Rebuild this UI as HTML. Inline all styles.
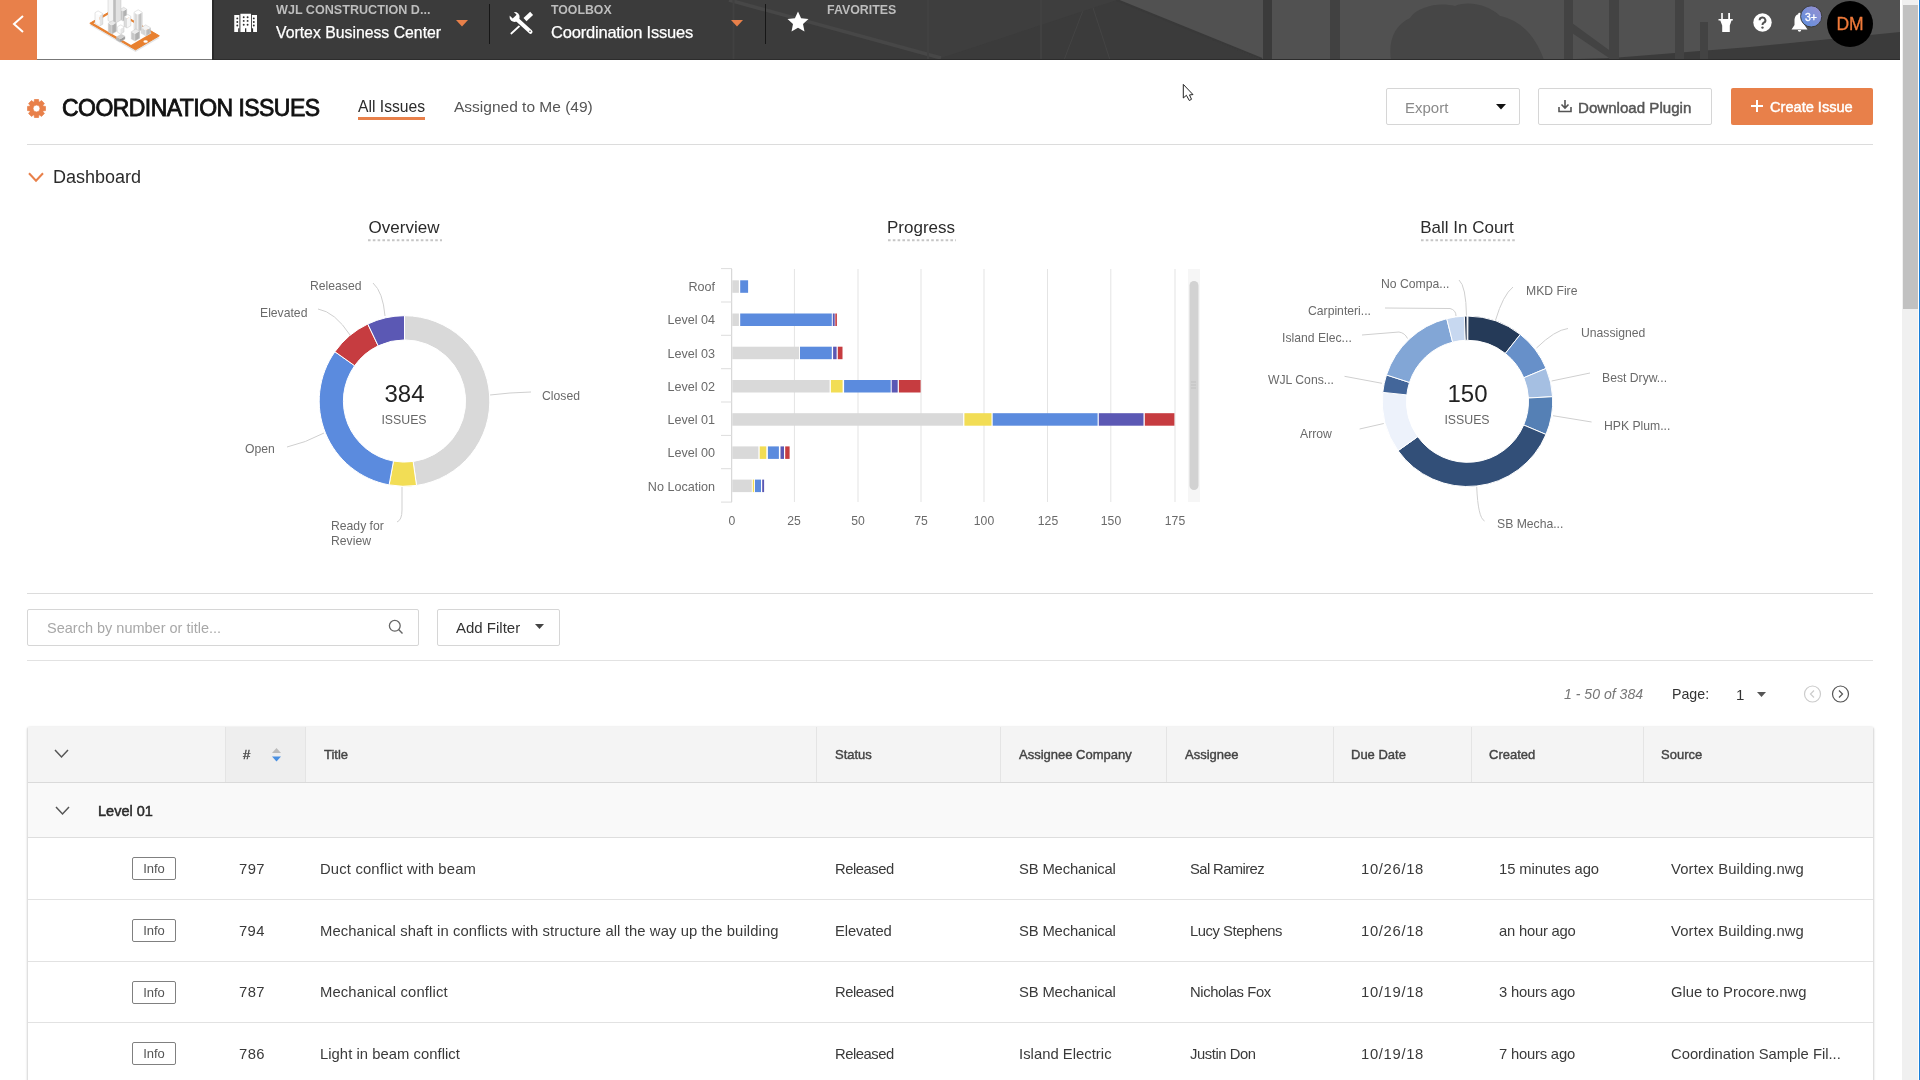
<!DOCTYPE html>
<html><head><meta charset="utf-8">
<style>
*{margin:0;padding:0;box-sizing:border-box}
html,body{width:1920px;height:1080px;overflow:hidden;background:#fff}
body{font-family:"Liberation Sans",sans-serif;color:#333;position:relative}
.a,.td,.th,.lbl,.info{will-change:transform}
.a{position:absolute;white-space:nowrap}
.hdr{position:absolute;left:0;top:0;width:1900px;height:60px;background:#464646;overflow:hidden}
.rule{position:absolute;height:1px;background:#dcdcdc}
.btn{position:absolute;border:1px solid #d6d6d6;border-radius:2px;background:#fff}
.lbl{position:absolute;white-space:nowrap;font-size:12.2px;line-height:13px;color:#6a6a6a;margin-top:1px}
.th{position:absolute;white-space:nowrap;font-size:13px;line-height:14px;color:#444;-webkit-text-stroke:0.4px #444}
.td{position:absolute;white-space:nowrap;font-size:14.7px;line-height:15px;color:#3a3a3a}
.info{position:absolute;left:132px;width:44px;height:23px;border:1.3px solid #808080;border-radius:2px;font-size:13px;line-height:22px;text-align:center;color:#555}
.rowline{position:absolute;left:28px;width:1845px;height:1px;background:#e2e2e2}
</style></head>
<body>
<!-- HEADER -->
<div class="hdr">
<svg width="1900" height="60" style="position:absolute;left:0;top:0">
<rect x="212" y="0" width="1688" height="60" fill="#3b3b3b"/>
<path d="M1117,0 L1900,0 L1900,32 L1750,47 L1612,58 L1540,60 L1262,60Z" fill="#515151"/>
<path d="M1117,0 L1262,59" stroke="#393939" stroke-width="2"/>
<path d="M1087,0 L1064,60 M1090.5,0 L1110,60" stroke="#444" stroke-width="1"/>
<path d="M729,0 L941,58 L1117,0Z" fill="#3e3e3e"/><path d="M729,0 L941,58" stroke="#474747" stroke-width="3.5"/><path d="M733.5,0 V60 M928,0 V60 M1041,0 V60" stroke="#414141" stroke-width="2"/>
<rect x="1263" y="0" width="9" height="60" fill="#3b3b3b"/>
<rect x="1330" y="0" width="10" height="60" fill="#414141"/>
<path d="M1391,60 C1388,40 1395,25 1410,18 C1418,6 1440,2 1455,6 C1470,0 1490,6 1500,16 C1520,20 1535,35 1544,60Z" fill="#464646"/>
<rect x="1564" y="0" width="9" height="60" fill="#434343"/>
<rect x="1609" y="0" width="10" height="60" fill="#434343"/>
<path d="M1572,23 L1609,50 L1609,58 L1572,33Z" fill="#434343"/>
<rect x="1675" y="0" width="9" height="60" fill="#434343"/>
<rect x="1700" y="22" width="8" height="38" fill="#434343"/>
<rect x="0" y="59" width="1900" height="1" fill="#2c2c2c"/>
<rect x="212" y="0" width="2" height="60" fill="#2a2a2a"/>
</svg>
</div>
<div class="a" style="left:0;top:0;width:37px;height:60px;background:#e8804a"></div>
<svg class="a" style="left:10px;top:14px" width="16" height="20"><path d="M13,2 L4,10 L13,18" stroke="#fff" stroke-width="2" fill="none"/></svg>
<div class="a" style="left:37px;top:0;width:175px;height:59px;background:#fff"></div>
<div class="a" style="left:37px;top:59px;width:175px;height:1px;background:#777"></div>
<!-- logo -->
<svg class="a" style="left:80px;top:0" width="90" height="56" viewBox="80 0 90 56">
<path d="M89.5,25 L135.5,52 L159.5,38 L114,11Z" fill="#e4e5e6"/>
<path d="M89.8,23.3 L135.5,49.8 L159.3,35.8 L113.7,9.3Z" fill="#e8802f" stroke="#e8802f" stroke-width="1" stroke-linejoin="round"/>
<path d="M93.5,23.2 L131,45 L151.5,33 L113.8,11.2Z" fill="#fff"/>
<ellipse cx="145.6" cy="41.5" rx="2.2" ry="1.3" fill="#fff"/>
<path d="M123.0,21.0 L120.0,19.3 L120.0,9.5 L123.0,11.2Z" fill="#d6d6d6"/><path d="M123.0,21.0 L126.7,18.9 L126.7,9.1 L123.0,11.2Z" fill="#bfbfbf"/><path d="M123.0,11.2 L120.0,9.5 L123.7,7.3 L126.7,9.1Z" fill="#ececec"/><path d="M124.3,19.7 V10.9" stroke="#9a9a9a" stroke-width="0.45"/><path d="M125.6,19.0 V10.2" stroke="#9a9a9a" stroke-width="0.45"/><path d="M121.7,19.7 V10.9" stroke="#b0b0b0" stroke-width="0.4"/><path d="M120.4,19.0 V10.2" stroke="#b0b0b0" stroke-width="0.4"/><path d="M120.0,19.3 L123.0,21.0 L126.7,18.9 L126.7,9.1 L123.7,7.3 L120.0,9.5Z" fill="none" stroke="#bdbdbd" stroke-width="0.4"/><path d="M114.0,24.0 L108.0,20.5 L108.0,-9.5 L114.0,-6.0Z" fill="#f4f4f4"/><path d="M114.0,24.0 L121.0,19.9 L121.0,-10.1 L114.0,-6.0Z" fill="#e2e2e2"/><path d="M114.0,-6.0 L108.0,-9.5 L115.0,-13.5 L121.0,-10.1Z" fill="#fafafa"/><path d="M113.2,23.536 L115.8,25.043999999999997 V-4.956000000000003 L113.2,-6.463999999999999Z" fill="#bdbdbd"/><path d="M108.0,20.5 L114.0,24.0 L121.0,19.9 L121.0,-10.1 L115.0,-13.5 L108.0,-9.5Z" fill="none" stroke="#bdbdbd" stroke-width="0.4"/><path d="M99.7,26.0 L95.0,23.3 L95.0,12.7 L99.7,15.4Z" fill="#fbfbfb"/><path d="M99.7,26.0 L102.8,24.2 L102.8,13.6 L99.7,15.4Z" fill="#e4e4e4"/><path d="M99.7,15.4 L95.0,12.7 L98.1,10.9 L102.8,13.6Z" fill="#fff"/><path d="M95.0,23.3 L99.7,26.0 L102.8,24.2 L102.8,13.6 L98.1,10.9 L95.0,12.7Z" fill="none" stroke="#bdbdbd" stroke-width="0.4"/><path d="M127.0,28.0 L124.0,26.3 L124.0,16.7 L127.0,18.4Z" fill="#dcdcdc"/><path d="M127.0,28.0 L130.8,25.8 L130.8,16.2 L127.0,18.4Z" fill="#f6f6f6"/><path d="M127.0,18.4 L124.0,16.7 L127.8,14.5 L130.8,16.2Z" fill="#fff"/><path d="M124.0,26.3 L127.0,28.0 L130.8,25.8 L130.8,16.2 L127.8,14.5 L124.0,16.7Z" fill="none" stroke="#bdbdbd" stroke-width="0.4"/><path d="M138.0,32.0 L134.0,29.7 L134.0,12.3 L138.0,14.6Z" fill="#f2f2f2"/><path d="M138.0,32.0 L142.2,29.6 L142.2,12.2 L138.0,14.6Z" fill="#dedede"/><path d="M138.0,14.6 L134.0,12.3 L138.2,9.8 L142.2,12.2Z" fill="#fff"/><path d="M139.3,30.7 V14.3" stroke="#9a9a9a" stroke-width="0.45"/><path d="M140.6,30.0 V13.6" stroke="#9a9a9a" stroke-width="0.45"/><path d="M136.7,30.7 V14.3" stroke="#b0b0b0" stroke-width="0.4"/><path d="M135.4,30.0 V13.6" stroke="#b0b0b0" stroke-width="0.4"/><path d="M134.0,29.7 L138.0,32.0 L142.2,29.6 L142.2,12.2 L138.2,9.8 L134.0,12.3Z" fill="none" stroke="#bdbdbd" stroke-width="0.4"/><path d="M112.0,34.0 L108.3,31.9 L108.3,23.2 L112.0,25.3Z" fill="#d2d2d2"/><path d="M112.0,34.0 L116.3,31.5 L116.3,22.8 L112.0,25.3Z" fill="#bdbdbd"/><path d="M112.0,25.3 L108.3,23.2 L112.6,20.7 L116.3,22.8Z" fill="#e8e8e8"/><path d="M113.3,32.7 V25.0" stroke="#9a9a9a" stroke-width="0.45"/><path d="M114.6,32.0 V24.3" stroke="#9a9a9a" stroke-width="0.45"/><path d="M115.9,31.2 V23.5" stroke="#9a9a9a" stroke-width="0.45"/><path d="M110.7,32.7 V25.0" stroke="#b0b0b0" stroke-width="0.4"/><path d="M109.4,32.0 V24.3" stroke="#b0b0b0" stroke-width="0.4"/><path d="M108.3,31.9 L112.0,34.0 L116.3,31.5 L116.3,22.8 L112.6,20.7 L108.3,23.2Z" fill="none" stroke="#bdbdbd" stroke-width="0.4"/><path d="M120.5,34.0 L117.3,32.1 L117.3,26.9 L120.5,28.8Z" fill="#fafafa"/><path d="M120.5,34.0 L124.0,32.0 L124.0,26.8 L120.5,28.8Z" fill="#e6e6e6"/><path d="M120.5,28.8 L117.3,26.9 L120.8,24.9 L124.0,26.8Z" fill="#fff"/><path d="M117.3,32.1 L120.5,34.0 L124.0,32.0 L124.0,26.8 L120.8,24.9 L117.3,26.9Z" fill="none" stroke="#bdbdbd" stroke-width="0.4"/><path d="M146.0,36.0 L141.2,33.2 L141.2,27.5 L146.0,30.3Z" fill="#e8e8e8"/><path d="M146.0,36.0 L150.5,33.4 L150.5,27.7 L146.0,30.3Z" fill="#cfcfcf"/><path d="M146.0,30.3 L141.2,27.5 L145.7,24.9 L150.5,27.7Z" fill="#f4f4f4"/><path d="M147.3,34.7 V30.0" stroke="#9a9a9a" stroke-width="0.45"/><path d="M148.6,34.0 V29.3" stroke="#9a9a9a" stroke-width="0.45"/><path d="M149.9,33.2 V28.5" stroke="#9a9a9a" stroke-width="0.45"/><path d="M144.7,34.7 V30.0" stroke="#b0b0b0" stroke-width="0.4"/><path d="M143.4,34.0 V29.3" stroke="#b0b0b0" stroke-width="0.4"/><path d="M142.1,33.2 V28.5" stroke="#b0b0b0" stroke-width="0.4"/><path d="M141.2,33.2 L146.0,36.0 L150.5,33.4 L150.5,27.7 L145.7,24.9 L141.2,27.5Z" fill="none" stroke="#bdbdbd" stroke-width="0.4"/><path d="M135.0,41.0 L131.3,38.9 L131.3,31.7 L135.0,33.8Z" fill="#d4d4d4"/><path d="M135.0,41.0 L139.6,38.3 L139.6,31.1 L135.0,33.8Z" fill="#bcbcbc"/><path d="M135.0,33.8 L131.3,31.7 L135.9,29.0 L139.6,31.1Z" fill="#ebebeb"/><path d="M136.3,39.7 V33.5" stroke="#9a9a9a" stroke-width="0.45"/><path d="M137.6,39.0 V32.8" stroke="#9a9a9a" stroke-width="0.45"/><path d="M138.9,38.2 V32.0" stroke="#9a9a9a" stroke-width="0.45"/><path d="M133.7,39.7 V33.5" stroke="#b0b0b0" stroke-width="0.4"/><path d="M132.4,39.0 V32.8" stroke="#b0b0b0" stroke-width="0.4"/><path d="M131.3,38.9 L135.0,41.0 L139.6,38.3 L139.6,31.1 L135.9,29.0 L131.3,31.7Z" fill="none" stroke="#bdbdbd" stroke-width="0.4"/><path d="M120.0,42.0 L116.3,39.9 L116.3,37.1 L120.0,39.2Z" fill="#b4b4b4"/><path d="M120.0,42.0 L125.0,39.1 L125.0,36.3 L120.0,39.2Z" fill="#9c9c9c"/><path d="M120.0,39.2 L116.3,37.1 L121.3,34.2 L125.0,36.3Z" fill="#cfcfcf"/><path d="M116.3,39.9 L120.0,42.0 L125.0,39.1 L125.0,36.3 L121.3,34.2 L116.3,37.1Z" fill="none" stroke="#bdbdbd" stroke-width="0.4"/>
</svg>

<!-- header nav -->
<svg class="a" style="left:234px;top:13px" width="24" height="20" viewBox="0 0 24 20">
<path d="M0.25,2.1 H5.4 V19 H0.25Z M6.4,0.8 H17 V19 H6.4Z M17.9,2.1 H23 V19 H17.9Z" fill="#fff"/>
<g fill="#2e2e2e"><circle cx="3.3" cy="5.4" r="0.95"/><circle cx="3.3" cy="9" r="0.95"/><circle cx="3.3" cy="12.5" r="0.95"/><circle cx="9.7" cy="4.2" r="0.95"/><circle cx="13.6" cy="4.2" r="0.95"/><circle cx="9.7" cy="7.9" r="0.95"/><circle cx="13.6" cy="7.9" r="0.95"/><circle cx="9.7" cy="11.7" r="0.95"/><circle cx="13.6" cy="11.7" r="0.95"/><circle cx="19.8" cy="5.4" r="0.95"/><circle cx="19.8" cy="9" r="0.95"/><circle cx="19.8" cy="12.5" r="0.95"/><rect x="4.2" y="15.3" width="1.3" height="3.8"/><rect x="11" y="15.3" width="1.3" height="3.8"/><rect x="17.8" y="15.3" width="1.3" height="3.8"/></g>
</svg>
<div class="a" style="left:276px;top:3px;font-size:12.6px;line-height:14px;font-weight:bold;color:#bdbdbd">WJL CONSTRUCTION D...</div>
<div class="a" style="left:276px;top:24px;font-size:15.8px;line-height:18px;color:#fff;-webkit-text-stroke:0.25px #fff">Vortex Business Center</div>
<svg class="a" style="left:456px;top:20px" width="12" height="7"><path d="M0,0 H12 L6,6.5Z" fill="#e8804a"/></svg>
<div class="a" style="left:489px;top:4px;width:1px;height:40px;background:#161616"></div>
<svg class="a" style="left:509px;top:10px" width="25" height="25" viewBox="0 0 25 25">
<path d="M16,9.6 L22.6,3.4" stroke="#fff" stroke-width="4.3"/>
<path d="M11,15.5 L2.3,23.5" stroke="#fff" stroke-width="1.7" stroke-linecap="round"/>
<path d="M7.5,9 L21.5,21.8" stroke="#3b3b3b" stroke-width="6.4" stroke-linecap="round"/>
<circle cx="5.6" cy="7" r="6.1" fill="#3b3b3b"/>
<path d="M7.5,9 L21.5,21.8" stroke="#fff" stroke-width="4" stroke-linecap="round"/>
<circle cx="5.6" cy="7" r="5" fill="#fff"/>
<path d="M-0.5,4.4 L3.4,0.5 L7.6,4.7 L3.7,8.6Z" fill="#3b3b3b"/>
<circle cx="21" cy="21.3" r="0.8" fill="#3b3b3b"/>
</svg>
<div class="a" style="left:551px;top:3px;font-size:12.3px;line-height:14px;font-weight:bold;color:#bdbdbd">TOOLBOX</div>
<div class="a" style="left:551px;top:23px;font-size:16.5px;line-height:18px;color:#fff;letter-spacing:-0.2px;-webkit-text-stroke:0.25px #fff">Coordination Issues</div>
<svg class="a" style="left:731px;top:20px" width="12" height="7"><path d="M0,0 H12 L6,6.5Z" fill="#e8804a"/></svg>
<div class="a" style="left:765px;top:4px;width:1px;height:40px;background:#161616"></div>
<svg class="a" style="left:785.5px;top:10.2px" width="24" height="24" viewBox="0 0 24 24"><path d="M12,1.5 L15.1,8.2 L22.5,9 L17,14 L18.5,21.5 L12,17.8 L5.5,21.5 L7,14 L1.5,9 L8.9,8.2Z" fill="#fff"/></svg>
<div class="a" style="left:827px;top:3px;font-size:12.4px;line-height:14px;font-weight:bold;color:#bdbdbd">FAVORITES</div>
<!-- right icons -->
<svg class="a" style="left:1718px;top:13px" width="16" height="19" viewBox="0 0 16 19">
<rect x="3.2" y="0" width="1.6" height="6" fill="#fff"/><rect x="10.2" y="0" width="1.8" height="6" fill="#fff"/>
<path d="M0.5,6 H14.8 V7.6 H13.5 L11.8,12.5 V19 H4.2 V12.5 L2.3,7.6 H0.5Z" fill="#fff"/>
</svg>
<svg class="a" style="left:1753px;top:13px" width="19" height="19" viewBox="0 0 19 19">
<circle cx="9.5" cy="9.5" r="9.2" fill="#fff"/>
<path d="M6.6,7.2 a2.9,2.7 0 1 1 4.2,2.5 c-1,0.6 -1.3,1 -1.3,2.2" stroke="#515151" stroke-width="2" fill="none"/>
<circle cx="9.5" cy="14.6" r="1.2" fill="#515151"/>
</svg>
<svg class="a" style="left:1791px;top:12px" width="17" height="21" viewBox="0 0 17 21">
<circle cx="8.5" cy="2" r="1.3" fill="#fff"/>
<path d="M8.5,2 c3,0 5,2.8 5,6.5 v4.5 l3,4.5 H0.5 l3,-4.5 V8.5 c0,-3.7 2,-6.5 5,-6.5Z" fill="#fff"/>
<path d="M6.8,18 a1.7,1.7 0 0 0 3.4,0Z" fill="#fff"/>
</svg>
<svg class="a" style="left:1800px;top:5px" width="23" height="23" viewBox="0 0 23 23">
<defs><linearGradient id="bg1" x1="0" y1="1" x2="1" y2="0"><stop offset="0" stop-color="#5b8fe0"/><stop offset="1" stop-color="#9b90cf"/></linearGradient></defs>
<circle cx="11.2" cy="11.4" r="10.6" fill="url(#bg1)" stroke="#3c3c3c" stroke-width="1"/>
</svg>
<div class="a" style="left:1805px;top:11.5px;font-size:10.5px;line-height:11px;color:#fff;-webkit-text-stroke:0.3px #fff">3+</div>
<div class="a" style="left:1827px;top:1px;width:46px;height:46px;border-radius:50%;background:#000"></div>
<div class="a" style="left:1827px;top:13px;width:46px;text-align:center;font-size:17.5px;line-height:22px;color:#f07a3a;-webkit-text-stroke:0.3px #f07a3a">DM</div>

<!-- TITLE ROW -->
<svg class="a" style="left:27px;top:98.5px" width="19" height="19" viewBox="0 0 19 19"><path fill="#e8804a" fill-rule="evenodd" stroke="#e8804a" stroke-width="0.6" stroke-linejoin="round" d="M7.03,2.95 L7.45,0.33 L11.55,0.33 L11.97,2.95 L12.39,3.12 L14.54,1.56 L17.44,4.46 L15.88,6.61 L16.05,7.03 L18.67,7.45 L18.67,11.55 L16.05,11.97 L15.88,12.39 L17.44,14.54 L14.54,17.44 L12.39,15.88 L11.97,16.05 L11.55,18.67 L7.45,18.67 L7.03,16.05 L6.61,15.88 L4.46,17.44 L1.56,14.54 L3.12,12.39 L2.95,11.97 L0.33,11.55 L0.33,7.45 L2.95,7.03 L3.12,6.61 L1.56,4.46 L4.46,1.56 L6.61,3.12Z M9.5,6.1 A3.4,3.4 0 1 0 9.51,6.1Z"/></svg>
<div class="a" style="left:62px;top:97px;font-size:23px;line-height:23px;color:#111;-webkit-text-stroke:0.8px #111;letter-spacing:-0.55px">COORDINATION ISSUES</div>
<div class="a" style="left:358px;top:97.5px;font-size:15.7px;line-height:18px;color:#2b2b2b">All Issues</div>
<div class="a" style="left:358px;top:117px;width:67px;height:3px;background:#e8804a"></div>
<div class="a" style="left:454px;top:97.5px;font-size:15.5px;line-height:18px;color:#555">Assigned to Me (49)</div>
<div class="btn" style="left:1386px;top:88px;width:134px;height:37px"></div>
<div class="a" style="left:1405px;top:99px;font-size:15px;line-height:17px;color:#8a8a8a">Export</div>
<svg class="a" style="left:1496px;top:104px" width="10" height="6"><path d="M0,0 H10 L5,5.5Z" fill="#111"/></svg>
<div class="btn" style="left:1538px;top:88px;width:174px;height:37px"></div>
<svg class="a" style="left:1558px;top:99px" width="14" height="14" viewBox="0 0 14 14"><path d="M7,1 V9 M3.5,5.5 L7,9 L10.5,5.5 M1,8 V12.5 H13 V8" stroke="#555" stroke-width="1.6" fill="none"/></svg>
<div class="a" style="left:1578px;top:99px;font-size:15.1px;line-height:17px;color:#555;-webkit-text-stroke:0.45px #555">Download Plugin</div>
<div class="a" style="left:1731px;top:88px;width:142px;height:37px;background:#e8804a;border-radius:2px"></div>
<svg class="a" style="left:1751px;top:100px" width="12" height="12"><path d="M6,0 V12 M0,6 H12" stroke="#fff" stroke-width="2"/></svg>
<div class="a" style="left:1770px;top:99px;font-size:14.6px;line-height:17px;color:#fff;-webkit-text-stroke:0.45px #fff">Create Issue</div>
<div class="rule" style="left:27px;top:144px;width:1846px"></div>
<!-- DASHBOARD -->
<svg class="a" style="left:28px;top:171.5px" width="16" height="11"><path d="M1,1.2 L8,8.8 L15,1.2" stroke="#e8804a" stroke-width="2" fill="none"/></svg>
<div class="a" style="left:53px;top:167px;font-size:18px;line-height:20px;color:#2b2b2b">Dashboard</div>

<!-- CHARTS -->
<svg class="a" style="left:0;top:0" width="1900" height="600">
<g stroke="#cfcfcf" stroke-width="1" fill="none">
<path d="M373,283 Q383,292 385,316"/>
<path d="M318,309 Q335,312 350,335"/>
<path d="M490,395 L510,393 L531,392"/>
<path d="M287,447 Q305,443 324,433"/>
<path d="M402,487 L402,510 Q402,520 397,522"/>
<path d="M1459,280 Q1466,286 1466.5,316"/>
<path d="M1513,287 Q1503,295 1495.6,320"/>
<path d="M1385,308 L1450,308.5 Q1456,310 1456,316"/>
<path d="M1568,328.5 Q1555,330 1536.5,348"/>
<path d="M1362,335 L1399,332 Q1405,333 1407.5,338.5"/>
<path d="M1590,373 L1551.6,381"/>
<path d="M1344.5,376.3 L1382,383.3"/>
<path d="M1591.6,422 L1553,415.7"/>
<path d="M1359.6,429 L1383.8,423.5"/>
<path d="M1476.7,486.5 Q1478,518 1484.6,521"/>
</g>
<path d="M404.50,315.70A85.3,85.3 0 0 1 416.52,485.45L413.11,461.49A61.1,61.1 0 0 0 404.50,339.90Z" fill="#d9d9d9" stroke="#fff" stroke-width="1"/>
<path d="M416.52,485.45A85.3,85.3 0 0 1 389.10,484.90L393.47,461.10A61.1,61.1 0 0 0 413.11,461.49Z" fill="#f2dd55" stroke="#fff" stroke-width="1"/>
<path d="M389.10,484.90A85.3,85.3 0 0 1 334.88,351.71L354.63,365.69A61.1,61.1 0 0 0 393.47,461.10Z" fill="#5b8bde" stroke="#fff" stroke-width="1"/>
<path d="M334.88,351.71A85.3,85.3 0 0 1 367.78,324.01L378.20,345.85A61.1,61.1 0 0 0 354.63,365.69Z" fill="#c63c40" stroke="#fff" stroke-width="1"/>
<path d="M367.78,324.01A85.3,85.3 0 0 1 404.50,315.70L404.50,339.90A61.1,61.1 0 0 0 378.20,345.85Z" fill="#5b58b4" stroke="#fff" stroke-width="1"/>
<path d="M1467.95,316.10A85.2,85.2 0 0 1 1520.31,334.44L1505.31,353.43A61,61 0 0 0 1467.82,340.30Z" fill="#253a58" stroke="#fff" stroke-width="1"/>
<path d="M1520.31,334.44A85.2,85.2 0 0 1 1546.10,368.42L1523.77,377.76A61,61 0 0 0 1505.31,353.43Z" fill="#6790c9" stroke="#fff" stroke-width="1"/>
<path d="M1546.10,368.42A85.2,85.2 0 0 1 1552.58,396.69L1528.41,398.00A61,61 0 0 0 1523.77,377.76Z" fill="#a5bfe2" stroke="#fff" stroke-width="1"/>
<path d="M1552.58,396.69A85.2,85.2 0 0 1 1545.98,434.45L1523.69,425.04A61,61 0 0 0 1528.41,398.00Z" fill="#5580b5" stroke="#fff" stroke-width="1"/>
<path d="M1545.98,434.45A85.2,85.2 0 0 1 1398.05,450.65L1417.78,436.64A61,61 0 0 0 1523.69,425.04Z" fill="#324f78" stroke="#fff" stroke-width="1"/>
<path d="M1398.05,450.65A85.2,85.2 0 0 1 1382.77,392.39L1406.83,394.92A61,61 0 0 0 1417.78,436.64Z" fill="#edf2fb" stroke="#fff" stroke-width="1"/>
<path d="M1382.77,392.39A85.2,85.2 0 0 1 1386.47,374.97L1409.49,382.45A61,61 0 0 0 1406.83,394.92Z" fill="#43669a" stroke="#fff" stroke-width="1"/>
<path d="M1386.47,374.97A85.2,85.2 0 0 1 1446.74,318.67L1452.64,342.14A61,61 0 0 0 1409.49,382.45Z" fill="#82a6d6" stroke="#fff" stroke-width="1"/>
<path d="M1446.74,318.67A85.2,85.2 0 0 1 1464.38,316.16L1465.26,340.34A61,61 0 0 0 1452.64,342.14Z" fill="#c7d8f0" stroke="#fff" stroke-width="1"/>
<path d="M1464.38,316.16A85.2,85.2 0 0 1 1467.05,316.10L1467.18,340.30A61,61 0 0 0 1465.26,340.34Z" fill="#1f2f4a" stroke="#fff" stroke-width="1"/>

<rect x="793.9" y="269" width="1" height="233" fill="#e4e4e4"/><rect x="857.5" y="269" width="1" height="233" fill="#e4e4e4"/><rect x="920.5" y="269" width="1" height="233" fill="#e4e4e4"/><rect x="983.5" y="269" width="1" height="233" fill="#e4e4e4"/><rect x="1047.0" y="269" width="1" height="233" fill="#e4e4e4"/><rect x="1110.3" y="269" width="1" height="233" fill="#e4e4e4"/><rect x="1174.5" y="269" width="1" height="233" fill="#e4e4e4"/>
<rect x="731.2" y="269" width="1" height="233" fill="#cfcfcf"/>
<rect x="721" y="268.1" width="11" height="1" fill="#ddd"/><rect x="721" y="301.5" width="11" height="1" fill="#ddd"/><rect x="721" y="334.8" width="11" height="1" fill="#ddd"/><rect x="721" y="368.2" width="11" height="1" fill="#ddd"/><rect x="721" y="401.5" width="11" height="1" fill="#ddd"/><rect x="721" y="434.9" width="11" height="1" fill="#ddd"/><rect x="721" y="468.2" width="11" height="1" fill="#ddd"/><rect x="721" y="501.6" width="11" height="1" fill="#ddd"/>
<rect x="732.3" y="280.3" width="6.6" height="12.5" fill="#d9d9d9"/><rect x="740.2" y="280.3" width="7.9" height="12.5" fill="#5b8bde"/><rect x="732.3" y="313.5" width="6.6" height="12.5" fill="#d9d9d9"/><rect x="740.2" y="313.5" width="91.6" height="12.5" fill="#5b8bde"/><rect x="832.8" y="313.5" width="1.9" height="12.5" fill="#5b58b4"/><rect x="835.3" y="313.5" width="1.6" height="12.5" fill="#c63c40"/><rect x="732.3" y="346.7" width="66.8" height="12.5" fill="#d9d9d9"/><rect x="800.0" y="346.7" width="31.8" height="12.5" fill="#5b8bde"/><rect x="833.1" y="346.7" width="3.5" height="12.5" fill="#5b58b4"/><rect x="837.8" y="346.7" width="4.7" height="12.5" fill="#c63c40"/><rect x="732.3" y="380.0" width="97.3" height="12.5" fill="#d9d9d9"/><rect x="830.9" y="380.0" width="11.7" height="12.5" fill="#f2dd55"/><rect x="844.1" y="380.0" width="46.6" height="12.5" fill="#5b8bde"/><rect x="891.7" y="380.0" width="6.0" height="12.5" fill="#5b58b4"/><rect x="898.9" y="380.0" width="21.7" height="12.5" fill="#c63c40"/><rect x="732.3" y="413.2" width="230.8" height="12.5" fill="#d9d9d9"/><rect x="964.4" y="413.2" width="27.1" height="12.5" fill="#f2dd55"/><rect x="992.7" y="413.2" width="104.9" height="12.5" fill="#5b8bde"/><rect x="1098.8" y="413.2" width="44.7" height="12.5" fill="#5b58b4"/><rect x="1144.8" y="413.2" width="29.6" height="12.5" fill="#c63c40"/><rect x="732.3" y="446.4" width="26.1" height="12.5" fill="#d9d9d9"/><rect x="759.7" y="446.4" width="6.6" height="12.5" fill="#f2dd55"/><rect x="767.9" y="446.4" width="11.0" height="12.5" fill="#5b8bde"/><rect x="780.5" y="446.4" width="3.5" height="12.5" fill="#5b58b4"/><rect x="785.2" y="446.4" width="4.4" height="12.5" fill="#c63c40"/><rect x="732.3" y="479.6" width="19.5" height="12.5" fill="#d9d9d9"/><rect x="752.8" y="479.6" width="1.3" height="12.5" fill="#f2dd55"/><rect x="755.0" y="479.6" width="6.0" height="12.5" fill="#5b8bde"/><rect x="762.2" y="479.6" width="1.9" height="12.5" fill="#5b58b4"/>
<rect x="1188" y="269" width="12" height="233" fill="#f6f6f6"/>
<rect x="1189.5" y="281" width="9" height="209" rx="4.5" fill="#d2d2d2"/>
<path d="M1191,382 H1196 M1191,385 H1196 M1191,388 H1196" stroke="#bbb" stroke-width="0.8"/>
<g stroke="#c6c6c6" stroke-width="2" stroke-dasharray="2.6,2.2">
<path d="M368,240.3 H442"/><path d="M888,240.3 H956"/><path d="M1421,240.3 H1516"/>
</g>
</svg>
<div class="a" style="left:304px;top:218px;width:200px;text-align:center;font-size:17px;line-height:19px;color:#2b2b2b">Overview</div>
<div class="a" style="left:821px;top:218px;width:200px;text-align:center;font-size:17px;line-height:19px;color:#2b2b2b">Progress</div>
<div class="a" style="left:1367px;top:218px;width:200px;text-align:center;font-size:17px;line-height:19px;color:#2b2b2b">Ball In Court</div>
<div class="a" style="left:364px;top:382px;width:81px;text-align:center;font-size:24px;line-height:24px;color:#222">384</div>
<div class="a" style="left:364px;top:413px;width:80px;text-align:center;font-size:12.3px;line-height:14px;color:#666">ISSUES</div>
<div class="a" style="left:1427px;top:382px;width:81px;text-align:center;font-size:24px;line-height:24px;color:#222">150</div>
<div class="a" style="left:1427px;top:413px;width:80px;text-align:center;font-size:12.3px;line-height:14px;color:#666">ISSUES</div>
<div class="lbl" style="left:310px;top:279px">Released</div>
<div class="lbl" style="left:260px;top:306px">Elevated</div>
<div class="lbl" style="left:542px;top:389px">Closed</div>
<div class="lbl" style="left:245px;top:442px">Open</div>
<div class="lbl" style="left:331px;top:519px">Ready for</div>
<div class="lbl" style="left:331px;top:534px">Review</div>
<div class="lbl" style="left:615px;top:280px;width:100px;text-align:right;font-size:12.6px">Roof</div>
<div class="lbl" style="left:615px;top:313px;width:100px;text-align:right;font-size:12.6px">Level 04</div>
<div class="lbl" style="left:615px;top:347px;width:100px;text-align:right;font-size:12.6px">Level 03</div>
<div class="lbl" style="left:615px;top:380px;width:100px;text-align:right;font-size:12.6px">Level 02</div>
<div class="lbl" style="left:615px;top:413px;width:100px;text-align:right;font-size:12.6px">Level 01</div>
<div class="lbl" style="left:615px;top:446px;width:100px;text-align:right;font-size:12.6px">Level 00</div>
<div class="lbl" style="left:615px;top:480px;width:100px;text-align:right;font-size:12.6px">No Location</div>
<div class="lbl" style="left:702.0px;top:514px;width:60px;text-align:center">0</div>
<div class="lbl" style="left:764.4px;top:514px;width:60px;text-align:center">25</div>
<div class="lbl" style="left:828.0px;top:514px;width:60px;text-align:center">50</div>
<div class="lbl" style="left:891.0px;top:514px;width:60px;text-align:center">75</div>
<div class="lbl" style="left:954.0px;top:514px;width:60px;text-align:center">100</div>
<div class="lbl" style="left:1017.5px;top:514px;width:60px;text-align:center">125</div>
<div class="lbl" style="left:1080.8px;top:514px;width:60px;text-align:center">150</div>
<div class="lbl" style="left:1145.0px;top:514px;width:60px;text-align:center">175</div>
<div class="lbl" style="left:1380.7px;top:277.4px">No Compa...</div>
<div class="lbl" style="left:1526.0px;top:284.4px">MKD Fire</div>
<div class="lbl" style="left:1308.0px;top:304.0px">Carpinteri...</div>
<div class="lbl" style="left:1581.0px;top:325.6px">Unassigned</div>
<div class="lbl" style="left:1282.0px;top:331.3px">Island Elec...</div>
<div class="lbl" style="left:1601.7px;top:371.0px">Best Dryw...</div>
<div class="lbl" style="left:1268.0px;top:372.5px">WJL Cons...</div>
<div class="lbl" style="left:1604.0px;top:418.5px">HPK Plum...</div>
<div class="lbl" style="left:1299.7px;top:427.3px">Arrow</div>
<div class="lbl" style="left:1497.0px;top:516.7px">SB Mecha...</div>

<!-- FILTER BAR -->
<div class="rule" style="left:27px;top:593px;width:1846px"></div>
<div class="btn" style="left:27px;top:609px;width:392px;height:37px"></div>
<div class="a" style="left:47px;top:620px;font-size:14.5px;line-height:17px;color:#a8a8a8">Search by number or title...</div>
<svg class="a" style="left:388px;top:619px" width="16" height="16" viewBox="0 0 16 16"><circle cx="6.8" cy="6.8" r="5.4" stroke="#666" stroke-width="1.3" fill="none"/><path d="M10.6,10.6 L14.5,14.5" stroke="#666" stroke-width="1.4"/></svg>
<div class="btn" style="left:437px;top:609px;width:123px;height:37px"></div>
<div class="a" style="left:456px;top:619px;font-size:15px;line-height:17px;color:#333">Add Filter</div>
<svg class="a" style="left:535px;top:624px" width="9" height="6"><path d="M0,0 H9 L4.5,5Z" fill="#444"/></svg>
<div class="rule" style="left:27px;top:660px;width:1846px;background:#e2e2e2"></div>
<!-- PAGINATION -->
<div class="a" style="left:1564px;top:686px;font-size:14.1px;line-height:17px;font-style:italic;color:#777">1 - 50 of 384</div>
<div class="a" style="left:1672px;top:686px;font-size:14.2px;line-height:17px;color:#333">Page:</div>
<div class="a" style="left:1736px;top:686px;font-size:15px;line-height:17px;color:#333">1</div>
<svg class="a" style="left:1757px;top:692px" width="9" height="6"><path d="M0,0 H9 L4.5,5Z" fill="#555"/></svg>
<svg class="a" style="left:1803px;top:685px" width="20" height="18" viewBox="0 0 20 18"><circle cx="9.5" cy="9" r="8" stroke="#ccc" stroke-width="1.2" fill="none"/><path d="M11,5.5 L7.5,9 L11,12.5" stroke="#ccc" stroke-width="1.2" fill="none"/></svg>
<svg class="a" style="left:1831px;top:685px" width="20" height="18" viewBox="0 0 20 18"><circle cx="9.5" cy="9" r="8" stroke="#555" stroke-width="1.2" fill="none"/><path d="M8,5.5 L11.5,9 L8,12.5" stroke="#555" stroke-width="1.2" fill="none"/></svg>
<!-- TABLE -->
<div class="a" style="left:27px;top:727px;width:1847px;height:360px;border:1px solid #e0e0e0;box-shadow:0 0 2px rgba(0,0,0,0.18);background:#fff;border-radius:3px"></div>
<div class="a" style="left:28px;top:727px;width:1845px;height:55px;background:#f4f4f4"></div>
<div class="a" style="left:225px;top:727px;width:80px;height:55px;background:#eeeeee"></div>
<div class="a" style="left:28px;top:782px;width:1845px;height:1px;background:#dadada"></div>
<div class="a" style="left:28px;top:783px;width:1845px;height:54px;background:#f9f9f9"></div>
<div class="a" style="left:28px;top:837px;width:1845px;height:1px;background:#dedede"></div>
<div class="a" style="left:225px;top:727px;width:1px;height:55px;background:#e4e4e4"></div>
<div class="a" style="left:305px;top:727px;width:1px;height:55px;background:#e4e4e4"></div>
<div class="a" style="left:816px;top:727px;width:1px;height:55px;background:#e4e4e4"></div>
<div class="a" style="left:1000px;top:727px;width:1px;height:55px;background:#e4e4e4"></div>
<div class="a" style="left:1166px;top:727px;width:1px;height:55px;background:#e4e4e4"></div>
<div class="a" style="left:1333px;top:727px;width:1px;height:55px;background:#e4e4e4"></div>
<div class="a" style="left:1471px;top:727px;width:1px;height:55px;background:#e4e4e4"></div>
<div class="a" style="left:1643px;top:727px;width:1px;height:55px;background:#e4e4e4"></div>
<svg class="a" style="left:54px;top:749px" width="15" height="10"><path d="M1,1 L7.5,8 L14,1" stroke="#555" stroke-width="1.5" fill="none"/></svg>
<svg class="a" style="left:55px;top:806px" width="15" height="10"><path d="M1,1 L7.5,8 L14,1" stroke="#555" stroke-width="1.5" fill="none"/></svg>
<div class="a" style="left:98px;top:803px;font-size:14.5px;line-height:17px;color:#2b2b2b;-webkit-text-stroke:0.5px #2b2b2b">Level 01</div>
<svg class="a" style="left:271px;top:747px" width="11" height="16"><path d="M1,6 L5.5,1 L10,6Z" fill="#bbb"/><path d="M1,9.5 L5.5,14.5 L10,9.5Z" fill="#4a90e2"/></svg>
<div class="th" style="left:243px;top:748px">#</div>
<div class="th" style="left:324px;top:748px">Title</div>
<div class="th" style="left:835px;top:748px">Status</div>
<div class="th" style="left:1019px;top:748px">Assignee Company</div>
<div class="th" style="left:1185px;top:748px">Assignee</div>
<div class="th" style="left:1351px;top:748px">Due Date</div>
<div class="th" style="left:1489px;top:748px">Created</div>
<div class="th" style="left:1661px;top:748px">Source</div>
<div class="info" style="top:857px">Info</div>
<div class="td" style="left:239px;top:862px;font-size:14.8px;letter-spacing:0.44px">797</div>
<div class="td" style="left:320px;top:862px;font-size:14.8px;letter-spacing:0.17px">Duct conflict with beam</div>
<div class="td" style="left:835px;top:862px;font-size:14.8px;letter-spacing:-0.48px">Released</div>
<div class="td" style="left:1019px;top:862px;font-size:14.8px;letter-spacing:-0.15px">SB Mechanical</div>
<div class="td" style="left:1190px;top:862px;font-size:14.8px;letter-spacing:-0.60px">Sal Ramirez</div>
<div class="td" style="left:1361px;top:862px;font-size:14.8px;letter-spacing:0.67px">10/26/18</div>
<div class="td" style="left:1499px;top:862px;font-size:14.8px;letter-spacing:-0.09px">15 minutes ago</div>
<div class="td" style="left:1671px;top:862px;font-size:14.8px;letter-spacing:0.16px">Vortex Building.nwg</div>
<div class="info" style="top:919px">Info</div>
<div class="td" style="left:239px;top:924px;font-size:14.8px;letter-spacing:0.34px">794</div>
<div class="td" style="left:320px;top:924px;font-size:14.8px;letter-spacing:0.11px">Mechanical shaft in conflicts with structure all the way up the building</div>
<div class="td" style="left:835px;top:924px;font-size:14.8px;letter-spacing:-0.11px">Elevated</div>
<div class="td" style="left:1019px;top:924px;font-size:14.8px;letter-spacing:-0.15px">SB Mechanical</div>
<div class="td" style="left:1190px;top:924px;font-size:14.8px;letter-spacing:-0.45px">Lucy Stephens</div>
<div class="td" style="left:1361px;top:924px;font-size:14.8px;letter-spacing:0.67px">10/26/18</div>
<div class="td" style="left:1499px;top:924px;font-size:14.8px;letter-spacing:-0.23px">an hour ago</div>
<div class="td" style="left:1671px;top:924px;font-size:14.8px;letter-spacing:0.16px">Vortex Building.nwg</div>
<div class="rowline" style="top:899px"></div>
<div class="info" style="top:981px">Info</div>
<div class="td" style="left:239px;top:985px;font-size:14.8px;letter-spacing:0.44px">787</div>
<div class="td" style="left:320px;top:985px;font-size:14.8px;letter-spacing:0.14px">Mechanical conflict</div>
<div class="td" style="left:835px;top:985px;font-size:14.8px;letter-spacing:-0.48px">Released</div>
<div class="td" style="left:1019px;top:985px;font-size:14.8px;letter-spacing:-0.15px">SB Mechanical</div>
<div class="td" style="left:1190px;top:985px;font-size:14.8px;letter-spacing:-0.40px">Nicholas Fox</div>
<div class="td" style="left:1361px;top:985px;font-size:14.8px;letter-spacing:0.67px">10/19/18</div>
<div class="td" style="left:1499px;top:985px;font-size:14.8px;letter-spacing:-0.20px">3 hours ago</div>
<div class="td" style="left:1671px;top:985px;font-size:14.8px;letter-spacing:0.03px">Glue to Procore.nwg</div>
<div class="rowline" style="top:961px"></div>
<div class="info" style="top:1042px">Info</div>
<div class="td" style="left:239px;top:1047px;font-size:14.8px;letter-spacing:0.44px">786</div>
<div class="td" style="left:320px;top:1047px;font-size:14.8px;letter-spacing:0.04px">Light in beam conflict</div>
<div class="td" style="left:835px;top:1047px;font-size:14.8px;letter-spacing:-0.48px">Released</div>
<div class="td" style="left:1019px;top:1047px;font-size:14.8px;letter-spacing:0.03px">Island Electric</div>
<div class="td" style="left:1190px;top:1047px;font-size:14.8px;letter-spacing:-0.44px">Justin Don</div>
<div class="td" style="left:1361px;top:1047px;font-size:14.8px;letter-spacing:0.67px">10/19/18</div>
<div class="td" style="left:1499px;top:1047px;font-size:14.8px;letter-spacing:-0.20px">7 hours ago</div>
<div class="td" style="left:1671px;top:1047px;font-size:14.8px;letter-spacing:-0.02px">Coordination Sample Fil...</div>
<div class="rowline" style="top:1022px"></div>
<svg class="a" style="left:1175px;top:78px" width="30" height="30" viewBox="1175 78 30 30"><path d="M1183.3,84.4 L1183.3,98 L1186.4,95.3 L1189.3,100.5 L1191.5,99.3 L1189.5,94.9 L1193,94.6Z" fill="#fff" stroke="#222" stroke-width="1" stroke-linejoin="round"/></svg>
<!-- scrollbar -->
<div class="a" style="left:1900px;top:0;width:20px;height:1080px;background:#fff"></div>
<div class="a" style="left:1902px;top:0;width:16px;height:1080px;background:#f0f0f0"></div>
<div class="a" style="left:1903px;top:5px;width:15px;height:304px;background:#c1c1c1"></div>
<div class="a" style="left:1919px;top:0;width:1px;height:1080px;background:#1a7fd9"></div>
</body></html>
